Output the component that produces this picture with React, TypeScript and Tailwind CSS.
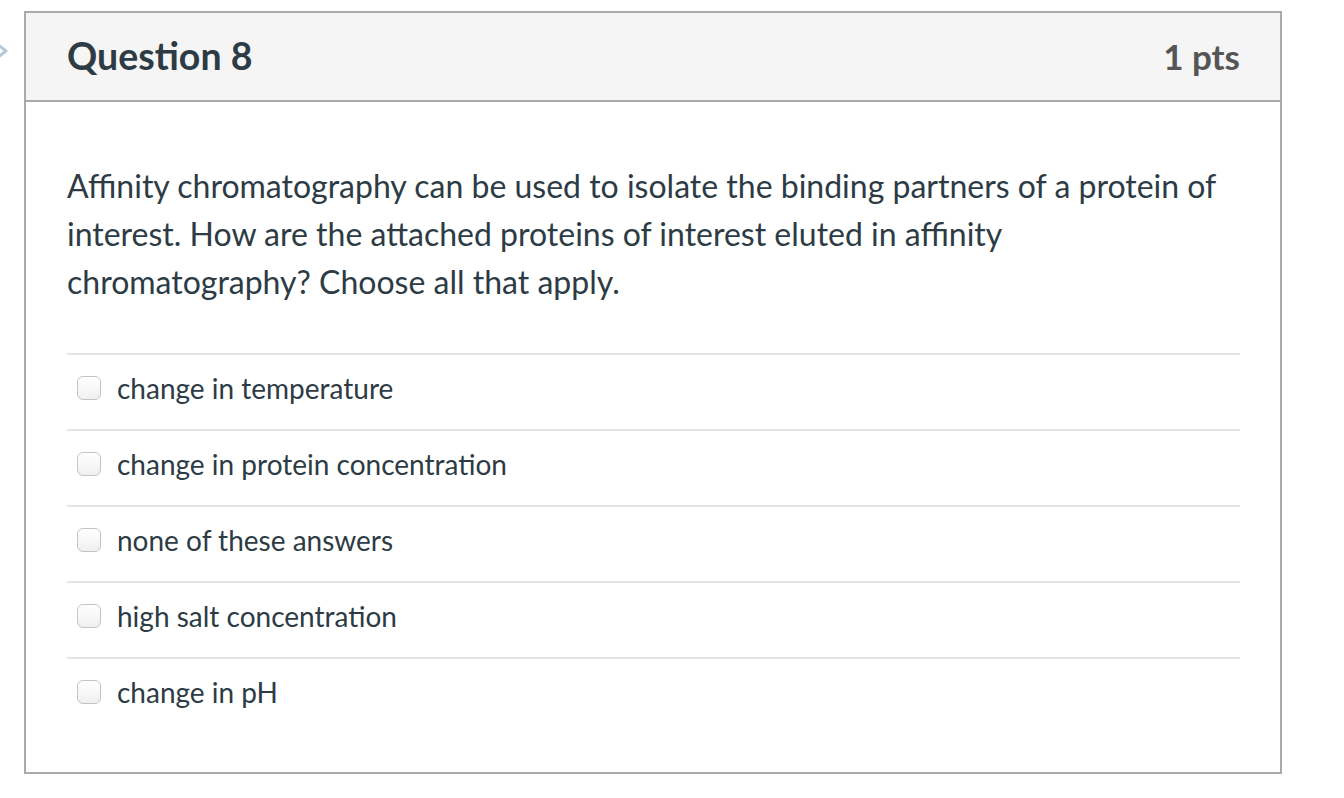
export default function App() {
  const answers = [
    'change in temperature',
    'change in protein concentration',
    'none of these answers',
    'high salt concentration',
    'change in pH',
  ]

  return (
    <div
      className="relative h-[798px] w-[1344px] overflow-hidden bg-white pt-[11px] pl-[24px]"
      style={{ fontFamily: 'Lato, "Open Sans", sans-serif' }}
    >
      <svg className="absolute left-[-6px] top-[42px]" width="16" height="18" viewBox="0 0 16 18">
        <path d="M3 2 L12 9 L3 16" fill="none" stroke="#b3c8dc" strokeWidth="3" strokeLinecap="round" strokeLinejoin="round" />
      </svg>

      <div className="flex h-[763px] w-[1258px] flex-col border-2 border-[#aaaaaa]">
        <div className="flex h-[89px] items-center justify-between border-b-2 border-[#aaaaaa] bg-[#f5f5f5] pl-[41px] pr-[40px]">
          <h2 className="text-[37.5px] font-bold text-[#2d3b45]">Question 8</h2>
          <span className="text-[35px] font-bold text-[#555555]">1 pts</span>
        </div>

        <div className="px-[41px] pt-[60px]">
          <p className="text-[32px] leading-[48px] text-[#2d3b45]">
            Affinity chromatography can be used to isolate the binding partners of a protein of interest. How are the
            attached proteins of interest eluted in affinity chromatography? Choose all that apply.
          </p>

          <div className="mt-[47px] w-[1173px]">
            {answers.map((a) => (
              <label key={a} className="flex h-[76px] items-center border-t-2 border-[#e5e5e5] pb-[8px]">
                <span className="ml-[10px] mr-[16px] h-[24px] w-[24px] shrink-0 rounded-[6px] border border-[#c4c4c4] bg-gradient-to-b from-white to-[#f0f0f0]" />
                <span className="text-[28px] text-[#2d3b45]">{a}</span>
              </label>
            ))}
          </div>
        </div>
      </div>
    </div>
  )
}
